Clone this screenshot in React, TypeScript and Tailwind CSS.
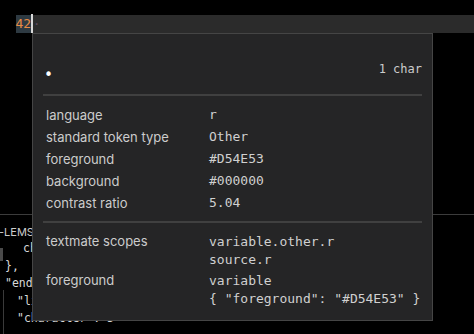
import React from "react";

const mono = "font-['DejaVu_Sans_Mono',_'Liberation_Mono',_monospace]";
const sans = "font-['Inter',_'Noto_Sans',_sans-serif]";

function Row({ label, lines, leading }: { label: string; lines: string[]; leading: string }) {
  return (
    <div className="flex py-[2px]">
      <div className={`w-[166px] shrink-0 pl-[3px] ${sans} text-[13px] ${leading} text-[#cccccc]`}>{label}</div>
      <div className={`${mono} text-[13px] ${leading} text-[#d0d0d0] whitespace-pre`}>
        {lines.map((l, i) => (
          <div key={i}>{l}</div>
        ))}
      </div>
    </div>
  );
}

export default function App() {
  return (
    <div className="relative w-[474px] h-[334px] bg-black overflow-hidden">
      {/* editor */}
      <div className="h-[15px]" />
      <div className={`flex h-[18px] ${mono} text-[13px] leading-[18px]`}>
        <div className="w-[15.5px] shrink-0" />
        <span className="bg-[#2e3a42] text-[#e78c45] whitespace-pre">42</span>
        <div className="w-[1.5px] bg-[#d8d8d8] -mt-[1px]" />
        <div className="flex-1 bg-[#2b2b2b] text-[#5a4a5e]">·</div>
      </div>
      <div className="h-[181px]" />
      <div className="h-px bg-[#3c3c3c]" />
      {/* panel */}
      <div className={`mt-[10px] h-[15px] leading-[14px] text-[11px] ${sans} text-[#cccccc] -ml-[1px]`}>-LEMS</div>
      <div className={`relative ${mono} text-[11.5px] leading-[17.5px] text-[#d8d8d8] whitespace-pre`}>
        <div className="pl-[23px] w-[32px] overflow-hidden">ch</div>
        <div className="pl-[5px] w-[32px] overflow-hidden">{"},"}</div>
        <div className="pl-[5px] w-[32px] overflow-hidden">{'"end": {'}</div>
        <div className="pl-[17px] w-[32px] overflow-hidden">{'"line": 10,'}</div>
        <div className="pl-[17px]">{'"character": 3'}</div>
        <div className="absolute left-0 top-[8px] w-[2.5px] h-[13px] bg-[#4a4a4a]" />
        <div className="absolute left-[3px] top-[50px] w-px h-[60px] bg-[#3a3a3a]" />
      </div>

      {/* hover widget */}
      <div className="absolute left-[32px] top-[33px] w-[401px] h-[288px] border border-[#454545] bg-[#252526]">
        <div className="flex justify-between px-[10px] h-[60px]">
          <span className={`${mono} text-[15px] leading-[18px] text-white mt-[32px] ml-[1px]`}>•</span>
          <span className={`${mono} text-[12px] leading-[18px] text-[#cccccc] mt-[26px]`}>1 char</span>
        </div>
        <div className="mx-[10px] h-[2px] bg-[#404040]" />
        <div className="px-[10px] mt-[8px]">
          <Row label="language" lines={["r"]} leading="leading-[18px]" />
          <Row label="standard token type" lines={["Other"]} leading="leading-[18px]" />
          <Row label="foreground" lines={["#D54E53"]} leading="leading-[18px]" />
          <Row label="background" lines={["#000000"]} leading="leading-[18px]" />
          <Row label="contrast ratio" lines={["5.04"]} leading="leading-[18px]" />
        </div>
        <div className="mx-[10px] mt-[7px] h-[2px] bg-[#404040]" />
        <div className="px-[10px] mt-[8px]">
          <Row label="textmate scopes" lines={["variable.other.r", "source.r"]} leading="leading-[17.5px]" />
          <Row label="foreground" lines={["variable", '{ "foreground": "#D54E53" }']} leading="leading-[17.5px]" />
        </div>
      </div>
    </div>
  );
}
